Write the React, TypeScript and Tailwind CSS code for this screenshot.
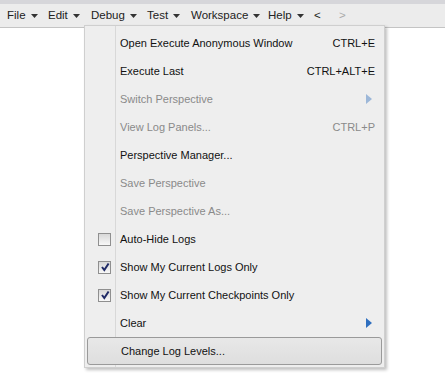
import React from 'react';

type Item = {
  label: string;
  shortcut?: string;
  disabled?: boolean;
  submenu?: boolean;
  check?: boolean;
  active?: boolean;
};

const items: Item[] = [
  { label: 'Open Execute Anonymous Window', shortcut: 'CTRL+E' },
  { label: 'Execute Last', shortcut: 'CTRL+ALT+E' },
  { label: 'Switch Perspective', disabled: true, submenu: true },
  { label: 'View Log Panels...', shortcut: 'CTRL+P', disabled: true },
  { label: 'Perspective Manager...' },
  { label: 'Save Perspective', disabled: true },
  { label: 'Save Perspective As...', disabled: true },
  { label: 'Auto-Hide Logs', check: false },
  { label: 'Show My Current Logs Only', check: true },
  { label: 'Show My Current Checkpoints Only', check: true },
  { label: 'Clear', submenu: true },
  { label: 'Change Log Levels...', active: true },
];

const menus = [
  { name: 'File', w: 'w-[41px]' },
  { name: 'Edit', w: 'w-[43px]' },
  { name: 'Debug', w: 'w-[56px]' },
  { name: 'Test', w: 'w-[44px]' },
  { name: 'Workspace', w: 'w-[77px]' },
  { name: 'Help', w: 'w-[46px]' },
];

function Caret() {
  return (
    <svg width="7" height="4" viewBox="0 0 7 4" className="ml-[5px] mt-[1px]">
      <path d="M0 0h7L3.5 4z" fill="#333" />
    </svg>
  );
}

function Checkbox({ checked }: { checked: boolean }) {
  return (
    <div className="w-[13px] h-[13px] border border-[#8f8f8f] bg-gradient-to-b from-[#d8d8d8] to-[#f8f8f8] flex items-center justify-center">
      {checked && (
        <svg width="10" height="10" viewBox="0 0 10 10">
          <path d="M2 5l2.3 3L8.6 1.5" stroke="#1f2a66" strokeWidth="2" fill="none" />
        </svg>
      )}
    </div>
  );
}

function Arrow({ faded }: { faded?: boolean }) {
  return (
    <svg width="6" height="10" viewBox="0 0 6 10">
      <path d="M0 0l6 5-6 5z" fill={faded ? '#9cb7d8' : '#2f6fbf'} />
    </svg>
  );
}

export default function App() {
  return (
    <div className="relative w-[445px] h-[384px] bg-white overflow-hidden" style={{ fontFamily: '"Liberation Sans", Arial, sans-serif' }}>
      <div className="h-[4px] bg-[#d6d6da]" />
      <div className="h-[24px] bg-[#ececec] border-b border-[#c4c4c4] flex items-center pl-[7px] text-[11.5px] text-[#222]">
        {menus.map((m) => (
          <div key={m.name} className={'flex items-center ' + m.w}>
            <span>{m.name}</span>
            <Caret />
          </div>
        ))}
        <span className="w-[25px]">&lt;</span>
        <span className="text-[#aaa]">&gt;</span>
      </div>

      <div className="absolute left-[84px] top-[25px] w-[301px] h-[343px] bg-[#eeeeee] border border-[#cfcfcf] shadow-[2px_2px_3px_rgba(0,0,0,0.25)] pt-[3px] px-[2px]">
        <div className="absolute left-[30px] top-0 bottom-0 w-px bg-[#d8d8d8]" />
        {items.map((it) => (
          <div
            key={it.label}
            className={
              'relative h-[28px] flex items-center text-[11px] ' +
              (it.active ? 'border border-[#9a9a9a] rounded-[3px] bg-gradient-to-b from-[#e8e8e8] to-[#dedede]' : '') +
              (it.disabled ? ' text-[#8a8a8a]' : ' text-[#111]')
            }
          >
            <div className="w-[33px] flex justify-center pl-[2px]">
              {it.check !== undefined && <Checkbox checked={it.check} />}
            </div>
            <div className="flex-1">{it.label}</div>
            {it.shortcut && <div className="pr-[7px]">{it.shortcut}</div>}
            {it.submenu && (
              <div className="pr-[10px]">
                <Arrow faded={it.disabled} />
              </div>
            )}
          </div>
        ))}
      </div>
    </div>
  );
}
